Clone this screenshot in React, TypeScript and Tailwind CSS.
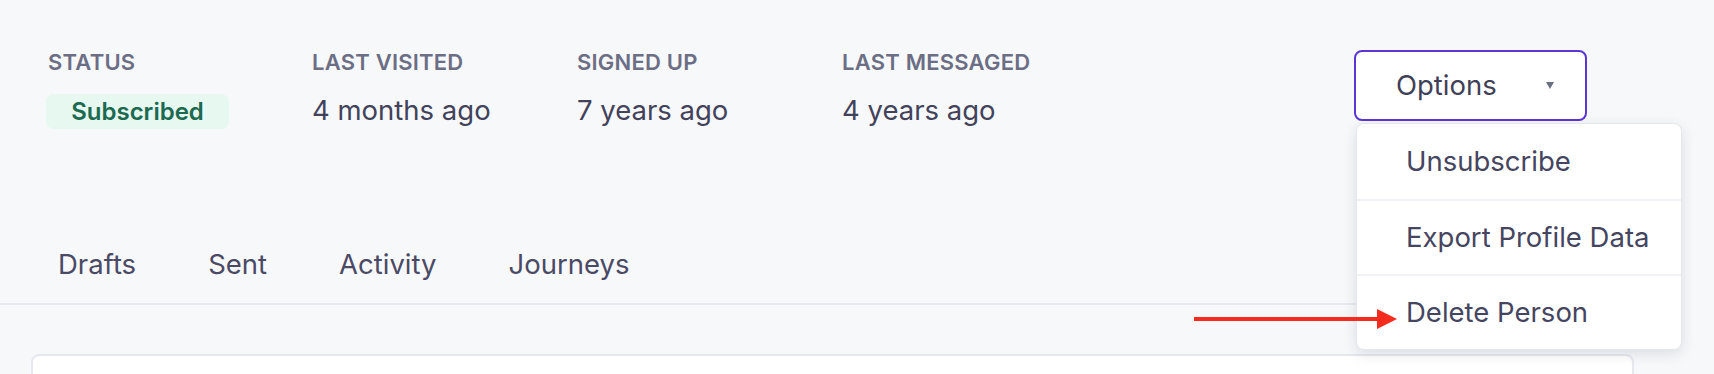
import { type ReactElement } from 'react';

const STATS: Array<{ label: string; value: string }> = [
  { label: 'Last Visited', value: '4 months ago' },
  { label: 'Signed Up', value: '7 years ago' },
  { label: 'Last Messaged', value: '4 years ago' },
];

const TABS = ['Drafts', 'Sent', 'Activity', 'Journeys'];

const MENU_ITEMS = ['Unsubscribe', 'Export Profile Data', 'Delete Person'];

function StatLabel({ children, className = '' }: { children: string; className?: string }): ReactElement {
  return (
    <div
      className={
        'h-[32px] text-[22px] leading-[32px] font-semibold uppercase tracking-[0.01em] text-[#6b6e84] ' +
        className
      }
    >
      {children}
    </div>
  );
}

function OptionsDropdown(): ReactElement {
  return (
    <div className="relative mt-[4px] mr-[127px]">
      <button
        type="button"
        className="flex h-[71px] w-[233px] items-center rounded-lg border-2 border-[#5b36d6] bg-white pl-[40px] pr-[31px] text-[27.5px] text-[#3f3f58]"
      >
        <span>Options</span>
        <svg className="ml-auto" width="8" height="7" viewBox="0 0 8 7">
          <path d="M0 0h8L4 7z" fill="#6b7085" />
        </svg>
      </button>

      <div className="absolute left-[2px] top-[73px] z-10 w-[326px] overflow-hidden rounded-lg border border-[#e6e7ec] bg-white shadow-[0_4px_14px_rgba(30,35,60,0.12)]">
        {MENU_ITEMS.map((item, i) => (
          <div
            key={item}
            className={
              'flex h-[75px] items-center pl-[49px] text-[27.5px] text-[#45455f] ' +
              (i > 0 ? 'border-t-2 border-[#f1f2f5]' : '')
            }
          >
            {item}
          </div>
        ))}
      </div>
    </div>
  );
}

export default function App(): ReactElement {
  return (
    <div
      className="relative h-[374px] w-full overflow-hidden bg-[#f7f8fa]"
      style={{ fontFamily: 'Inter, "Noto Sans", sans-serif' }}
    >
      {/* header stats */}
      <div className="flex items-start pt-[46px] pl-[46px]">
        <div className="w-[266px]">
          <StatLabel className="ml-[2px]">Status</StatLabel>
          <div className="mt-[16px] h-[35px] w-[183px] rounded-lg bg-[#e6f8f0] text-center text-[24px] leading-[35px] font-semibold text-[#1c6a50]">
            Subscribed
          </div>
        </div>
        {STATS.map((stat) => (
          <div key={stat.label} className="w-[265px]">
            <StatLabel>{stat.label}</StatLabel>
            <div className="mt-[12px] text-[27.5px] leading-[40px] text-[#42425b]">{stat.value}</div>
          </div>
        ))}
        <div className="ml-auto">
          <OptionsDropdown />
        </div>
      </div>

      {/* tabs */}
      <div className="mt-[114px] flex w-[1660px] gap-[72px] border-b-2 border-[#e8e9ef] pb-[19px] pl-[58px]">
        {TABS.map((tab) => (
          <div key={tab} className="text-[27.5px] leading-[40px] text-[#4a4a65]">
            {tab}
          </div>
        ))}
      </div>

      {/* card */}
      <div className="mt-[49px] ml-[31px] h-[120px] w-[1603px] rounded-lg border-2 border-[#e7e8ee] bg-white" />

      {/* annotation arrow */}
      <svg className="absolute left-[1194px] top-[309px] z-20" width="204" height="20" viewBox="0 0 204 20">
        <rect x="0" y="8" width="186" height="4" fill="#f52b1d" />
        <path d="M183 0L203 10L183 20z" fill="#f52b1d" />
      </svg>
    </div>
  );
}
